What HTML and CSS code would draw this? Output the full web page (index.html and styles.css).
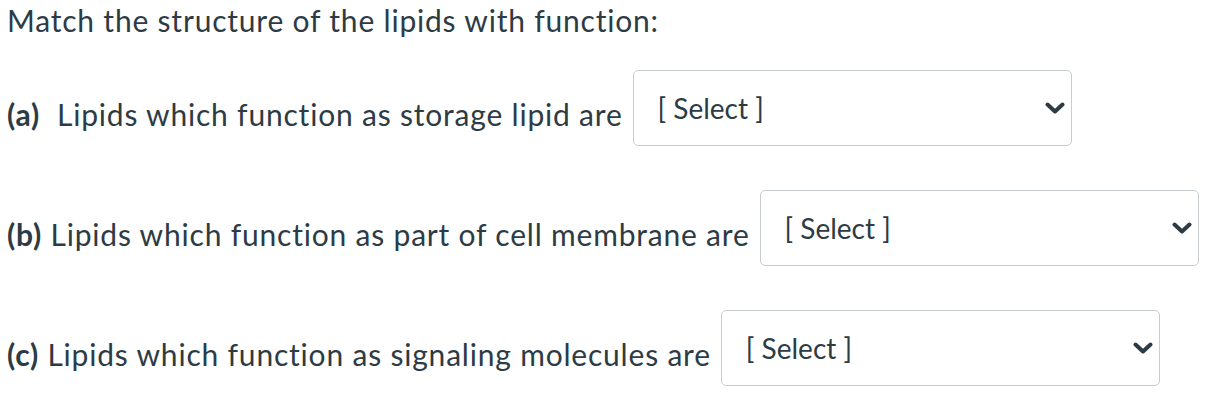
FILE: index.html
```html
<!DOCTYPE html>
<html lang="en">
<head>
<meta charset="utf-8">
<title>Match lipids</title>
<link rel="stylesheet" href="styles.css">
</head>
<body>
<div class="question">
  <p class="prompt">Match the structure of the lipids with function:</p>
  <div class="row">
    <span class="label"><strong>(a)</strong>&nbsp; Lipids which function as storage lipid are</span>
    <div class="select-wrap">
      <select class="select"><option>[ Select ]</option></select>
      <svg class="chevron" width="20" height="12" viewBox="0 0 20 12"><path d="M2.5 2.5 L10 9.5 L17.5 2.5" fill="none" stroke="currentColor" stroke-width="4" stroke-linecap="round" stroke-linejoin="round"/></svg>
    </div>
  </div>
  <div class="row">
    <span class="label"><strong>(b)</strong> Lipids which function as part of cell membrane are</span>
    <div class="select-wrap">
      <select class="select"><option>[ Select ]</option></select>
      <svg class="chevron" width="20" height="12" viewBox="0 0 20 12"><path d="M2.5 2.5 L10 9.5 L17.5 2.5" fill="none" stroke="currentColor" stroke-width="4" stroke-linecap="round" stroke-linejoin="round"/></svg>
    </div>
  </div>
  <div class="row">
    <span class="label"><strong>(c)</strong> Lipids which function as signaling molecules are</span>
    <div class="select-wrap">
      <select class="select"><option>[ Select ]</option></select>
      <svg class="chevron" width="20" height="12" viewBox="0 0 20 12"><path d="M2.5 2.5 L10 9.5 L17.5 2.5" fill="none" stroke="currentColor" stroke-width="4" stroke-linecap="round" stroke-linejoin="round"/></svg>
    </div>
  </div>
</div>
</body>
</html>
```
FILE: styles.css
```css
html, body {
  margin: 0;
  padding: 0;
  background: #ffffff;
}
body {
  font-family: Lato, "Open Sans", sans-serif;
  font-size: 30px;
  line-height: 35px;
  letter-spacing: 0.8px;
  color: #2d3b45;
}
.question {
  padding: 3px 7px 0 7px;
}
.prompt {
  margin: 0 0 32px 0;
}
.row {
  display: flex;
  align-items: flex-start;
  gap: 10px;
  margin-bottom: 44px;
}
.label {
  margin-top: 27px;
  white-space: nowrap;
}
.label strong {
  font-weight: 700;
}
.select-wrap {
  position: relative;
  flex: none;
}
.select {
  appearance: none;
  -webkit-appearance: none;
  display: block;
  box-sizing: border-box;
  width: 439px;
  height: 76px;
  margin: 0;
  padding: 0 40px 0 24px;
  border: 1px solid #c7cdd1;
  border-radius: 5px;
  background: #ffffff;
  font-family: Lato, "Open Sans", sans-serif;
  font-size: 28px;
  line-height: 35px;
  letter-spacing: 0;
  color: #2d3b45;
}
.chevron {
  position: absolute;
  right: 7px;
  top: 32px;
  color: #2d3b45;
  pointer-events: none;
}
```
